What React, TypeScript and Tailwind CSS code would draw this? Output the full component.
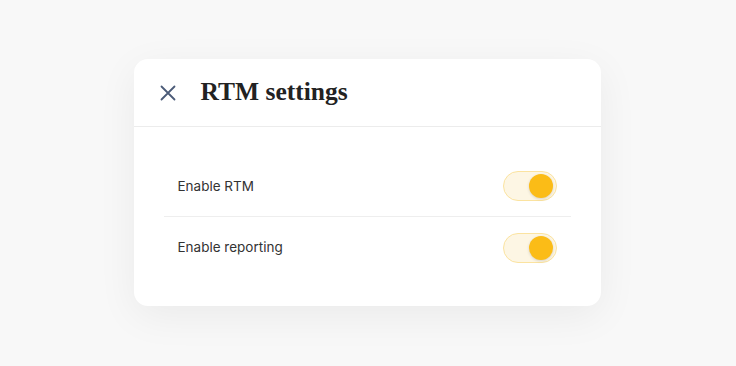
import React, { useState } from "react";

const Toggle = ({ on, onChange }: { on: boolean; onChange: () => void }) => {
  return (
    <button
      onClick={onChange}
      className={`relative w-[54px] h-[30px] rounded-full border ${
        on ? "bg-[#fdf6e4] border-[#fbe3a0]" : "bg-gray-100 border-gray-200"
      }`}
    >
      <span
        className={`absolute top-[2px] w-[24px] h-[24px] rounded-full bg-[#fbbc17] shadow-[0_1px_3px_rgba(0,0,0,0.15)] ${
          on ? "left-[25px]" : "left-[2px]"
        }`}
      />
    </button>
  );
};

const App = () => {
  // toggles
  const [rtm, setRtm] = useState(true);
  const [reporting, setReporting] = useState(true);

  return (
    <div className="w-[736px] h-[366px] bg-[#f8f8f8] flex items-center justify-center font-['Inter','Liberation_Sans',sans-serif]">
      <div className="w-[467px] h-[247px] bg-white rounded-[14px] shadow-[0_10px_40px_rgba(0,0,0,0.06)] -ml-[2px] mt-[-1px]">
        {/* Header */}
        <div className="h-[68px] flex items-center px-[25px] border-b border-[#ececec]">
          <button className="w-[18px] h-[18px] text-[#4b5b78] flex items-center justify-center mr-[24px]">
            <svg
              width="16"
              height="16"
              viewBox="0 0 16 16"
              fill="none"
              stroke="currentColor"
              strokeWidth="1.8"
              strokeLinecap="round"
            >
              <path d="M1.5 1.5L14.5 14.5M14.5 1.5L1.5 14.5" />
            </svg>
          </button>
          <h1 className="text-[25.5px] font-bold text-[#222] font-['Liberation_Serif',serif]">
            RTM settings
          </h1>
        </div>
        {/* Body */}
        <div className="px-[30px] pt-[29px]">
          <div className="flex items-center justify-between h-[61px] px-[14px] pr-[14px] border-b border-[#eeeeee]">
            <span className="text-[13.5px] text-[#333]">Enable RTM</span>
            <Toggle on={rtm} onChange={() => setRtm(!rtm)} />
          </div>
          <div className="flex items-center justify-between h-[61px] px-[14px] pr-[14px]">
            <span className="text-[13.5px] text-[#333]">Enable reporting</span>
            <Toggle on={reporting} onChange={() => setReporting(!reporting)} />
          </div>
        </div>
      </div>
    </div>
  );
};

export default App;
